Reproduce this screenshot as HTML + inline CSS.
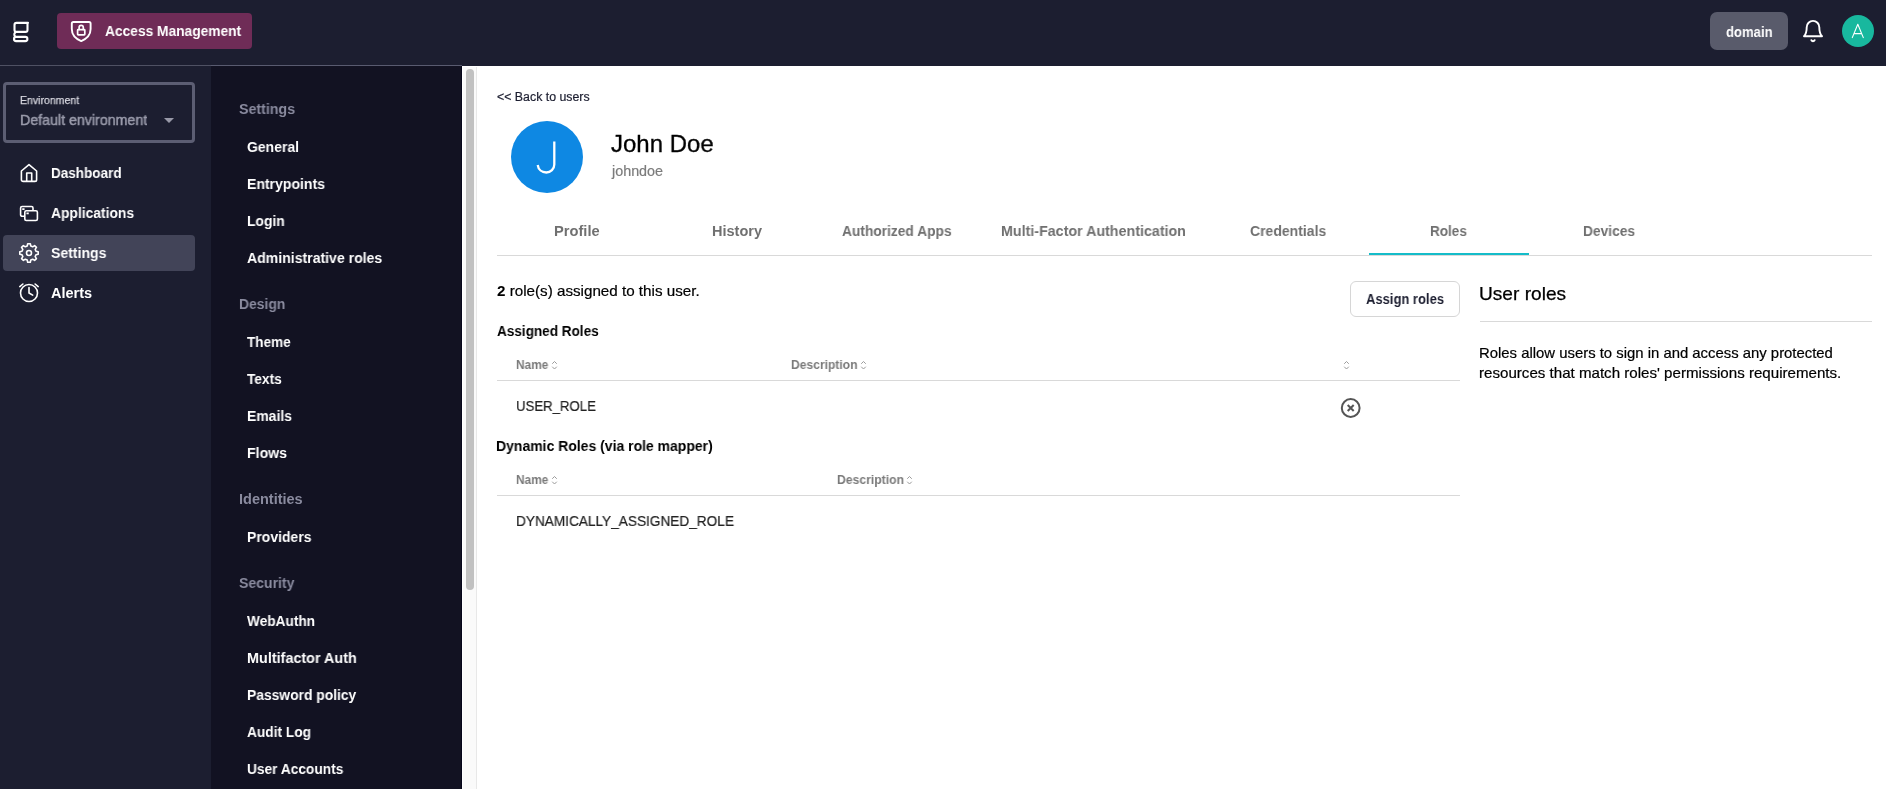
<!DOCTYPE html>
<html><head><meta charset="utf-8">
<style>
*{box-sizing:border-box;margin:0;padding:0}
html,body{width:1886px;height:789px;overflow:hidden;background:#fff;font-family:"Liberation Sans",sans-serif;}
.a{position:absolute;white-space:nowrap;line-height:1;transform-origin:0 0;will-change:transform}
.a b{-webkit-text-stroke:0}
#top{position:absolute;left:0;top:0;width:1886px;height:66px;background:#1c1e30}
#tl1{position:absolute;left:0;top:65px;width:211px;height:1px;background:#4f5163}
#tl2{position:absolute;left:211px;top:65px;width:251px;height:1px;background:#595b70}
#nav{position:absolute;left:0;top:66px;width:211px;height:723px;background:#1c1e30}
#sub{position:absolute;left:211px;top:66px;width:251px;height:723px;background:#121222;border-right:1px solid #06061a}
#sbar{position:absolute;left:462px;top:67px;width:15px;height:722px;background:#fafafa;border-right:1px solid #e8e8e8;border-left:1px solid #fff}
#thumb{position:absolute;left:466px;top:69px;width:8px;height:521px;background:#c1c1c1;border-radius:4px}
#amb{position:absolute;left:57px;top:13px;width:195px;height:36px;background:#6f2c57;border-radius:4px}
#dom{position:absolute;left:1710px;top:12px;width:78px;height:38px;background:#595b6b;border-radius:7px}
#av{position:absolute;left:1842px;top:15px;width:32px;height:32px;border-radius:50%;background:#18b89e}
#env{position:absolute;left:3px;top:82px;width:192px;height:61px;border:3px solid #5c5e73;border-radius:4px}
#sel{position:absolute;left:3px;top:235px;width:192px;height:36px;background:#424458;border-radius:4px}
.hl{position:absolute;height:1px;background:#d9d9d9}
svg{position:absolute;left:0;top:0;overflow:visible}
</style></head><body>
<div id="top"></div><div id="tl1"></div><div id="tl2"></div><div id="nav"></div><div id="sub"></div><div id="sbar"></div><div id="thumb"></div>
<div id="amb"></div><div id="dom"></div><div id="av"></div><div id="env"></div><div id="sel"></div>
<div style="position:absolute;left:511px;top:121px;width:72px;height:72px;border-radius:50%;background:#0e88e3"></div>
<div class="hl" style="left:497px;top:255px;width:1375px"></div>
<div style="position:absolute;left:1369px;top:253px;width:160px;height:2px;background:#14bcc9"></div>
<div style="position:absolute;left:1350px;top:281px;width:110px;height:36px;border:1px solid #d6d6d6;border-radius:6px"></div>
<div class="hl" style="left:497px;top:380px;width:963px"></div>
<div class="hl" style="left:497px;top:495px;width:963px"></div>
<div class="hl" style="left:1480px;top:321px;width:392px"></div>
<div style="position:absolute;left:164px;top:118px;width:0;height:0;border-left:5px solid transparent;border-right:5px solid transparent;border-top:5.500px solid #9899a8"></div>

<svg width="1886" height="789" viewBox="0 0 1886 789" fill="none" stroke="#fff" stroke-linecap="round" stroke-linejoin="round">
<g stroke-width="2.100">
<path d="M28 22.900H16.500a2 2 0 0 0-2 2v5a2 2 0 0 0 2 2h9a2 2 0 0 0 2-2V23"/>
<rect x="14" y="36.900" width="13.400" height="4.200" rx="2.100"/>
<path d="M15.600 32.200c-1.600.8-1.800 3-.4 4.400"/>
</g>
<g stroke-width="1.900">
<path d="M73.400 22H89a1.600 1.600 0 0 1 1.600 1.600V29c0 6-4 9.800-9.400 12.100C75.800 38.800 71.800 35 71.800 29V23.600A1.600 1.600 0 0 1 73.400 22Z"/>
</g>
<g stroke-width="1.700">
<rect x="77.600" y="29.600" width="7.200" height="5.300" rx=".6"/>
<path d="M79.100 29.400v-1.900a2.100 2.100 0 0 1 4.200 0v1.900"/>
</g>
<g stroke-width="1.600">
<path d="M21.400 171 29 164.700l7.600 6.300v8.700a1.700 1.700 0 0 1-1.700 1.700H23.100a1.700 1.700 0 0 1-1.700-1.700Z"/>
<path d="M26.700 181.200v-8.200h5v8.200"/>
</g>
<g stroke-width="1.600">
<path d="M24 216.300h-1.900a1.500 1.500 0 0 1-1.500-1.500V208a1.500 1.500 0 0 1 1.500-1.500h9.400a1.500 1.500 0 0 1 1.500 1.500v1.900"/>
<rect x="24.800" y="210.700" width="12.600" height="9.800" rx="1.500"/>
<path d="M23.100 209.200h.6M27.300 213.400h.6" stroke-width="1.700" stroke-linecap="square"/>
</g>
<g stroke-width="1.600">
<path d="M27.690 243.790 L30.310 243.790 L30.790 246.030 L32.670 246.800 L34.580 245.560 L36.440 247.420 L35.200 249.330 L35.970 251.210 L38.210 251.690 L38.210 254.310 L35.970 254.790 L35.200 256.670 L36.440 258.580 L34.580 260.440 L32.670 259.200 L30.790 259.970 L30.310 262.210 L27.690 262.210 L27.210 259.970 L25.330 259.200 L23.420 260.440 L21.560 258.580 L22.800 256.670 L22.030 254.790 L19.790 254.310 L19.790 251.690 L22.030 251.210 L22.800 249.330 L21.560 247.420 L23.420 245.560 L25.330 246.800 L27.210 246.030Z"/>
<circle cx="29" cy="253" r="2.500"/>
</g>
<g stroke-width="1.600">
<circle cx="29" cy="293" r="8.500"/>
<path d="M29 287.600V293l3.700 2.100"/>
<path d="M19.800 286.600l3.100-2.600M38.200 286.600l-3.100-2.600"/>
</g>
<g stroke-width="1.900">
<path d="M1804 36.200h18c-2.200-2.200-2.700-4.400-2.700-9a6.300 6.300 0 0 0-12.600 0c0 4.600-.5 6.800-2.700 9Z"/>
<path d="M1811.400 40.200a1.800 1.800 0 0 0 3.200 0"/>
</g>
<g stroke-width="1.100">
<path d="M1852.300 37.600 1857.800 24.200 1863.300 37.600M1854 33.600h7.600"/>
</g>
<g stroke-width="2.300" stroke-linecap="butt">
<path d="M554.300 141.500v23a8 8 0 0 1-8 8c-4.400 0-8-3-8.600-7.500"/>
</g>
<g stroke="#555" stroke-width="2" stroke-linecap="butt">
<circle cx="1350.700" cy="408" r="8.900"/>
<path d="M1347.700 405l6 6M1353.700 405l-6 6"/>
</g>
<g stroke="#9a9a9a" stroke-width="1" id="sorts">
<path d="M552.500 363.500l2-2 2 2M552.500 367l2 2 2-2"/>
<path d="M861.500 363.500l2-2 2 2M861.500 367l2 2 2-2"/>
<path d="M1344.500 363.500l2-2 2 2M1344.500 367l2 2 2-2"/>
<path d="M552.500 478.500l2-2 2 2M552.500 482l2 2 2-2"/>
<path d="M907.500 478.500l2-2 2 2M907.500 482l2 2 2-2"/>
</g>
</svg>
<div class="a" style="left:104.68px;top:24px;font-size:14.5px;font-weight:bold;color:#fff;transform:scaleX(0.9490)">Access Management</div>
<div class="a" style="left:1725.92px;top:25px;font-size:14.5px;font-weight:bold;color:#fff;transform:scaleX(0.9033)">domain</div>
<div class="a" style="left:19.92px;top:95px;font-size:11px;font-weight:normal;color:#d8d8e0;-webkit-text-stroke:0.25px #d8d8e0;transform:scaleX(0.9573)">Environment</div>
<div class="a" style="left:19.88px;top:113px;font-size:14.5px;font-weight:normal;color:#9a9bab;-webkit-text-stroke:0.5px #9a9bab;transform:scaleX(0.9804)">Default environment</div>
<div class="a" style="left:50.90px;top:166px;font-size:14.5px;font-weight:bold;color:#fff;transform:scaleX(0.9312)">Dashboard</div>
<div class="a" style="left:50.98px;top:206px;font-size:14.5px;font-weight:bold;color:#fff;transform:scaleX(0.9549)">Applications</div>
<div class="a" style="left:51.15px;top:246px;font-size:14.5px;font-weight:bold;color:#fff;transform:scaleX(0.9680)">Settings</div>
<div class="a" style="left:50.96px;top:286px;font-size:14.5px;font-weight:bold;color:#fff;transform:scaleX(0.9906)">Alerts</div>
<div class="a" style="left:238.84px;top:102px;font-size:14.5px;font-weight:bold;color:#8a8b9f;transform:scaleX(0.9787)">Settings</div>
<div class="a" style="left:246.95px;top:140px;font-size:14.5px;font-weight:bold;color:#fff;transform:scaleX(0.9631)">General</div>
<div class="a" style="left:246.66px;top:177px;font-size:14.5px;font-weight:bold;color:#fff;transform:scaleX(0.9678)">Entrypoints</div>
<div class="a" style="left:246.67px;top:214px;font-size:14.5px;font-weight:bold;color:#fff;transform:scaleX(0.9579)">Login</div>
<div class="a" style="left:246.97px;top:251px;font-size:14.5px;font-weight:bold;color:#fff;transform:scaleX(0.9702)">Administrative roles</div>
<div class="a" style="left:238.57px;top:297px;font-size:14.5px;font-weight:bold;color:#8a8b9f;transform:scaleX(0.9574)">Design</div>
<div class="a" style="left:247.34px;top:335px;font-size:14.5px;font-weight:bold;color:#fff;transform:scaleX(0.9337)">Theme</div>
<div class="a" style="left:247.33px;top:372px;font-size:14.5px;font-weight:bold;color:#fff;transform:scaleX(0.9443)">Texts</div>
<div class="a" style="left:246.67px;top:409px;font-size:14.5px;font-weight:bold;color:#fff;transform:scaleX(0.9599)">Emails</div>
<div class="a" style="left:246.66px;top:446px;font-size:14.5px;font-weight:bold;color:#fff;transform:scaleX(0.9733)">Flows</div>
<div class="a" style="left:238.60px;top:492px;font-size:14.5px;font-weight:bold;color:#8a8b9f;transform:scaleX(0.9998)">Identities</div>
<div class="a" style="left:246.67px;top:530px;font-size:14.5px;font-weight:bold;color:#fff;transform:scaleX(0.9645)">Providers</div>
<div class="a" style="left:238.85px;top:576px;font-size:14.5px;font-weight:bold;color:#8a8b9f;transform:scaleX(0.9681)">Security</div>
<div class="a" style="left:247.34px;top:614px;font-size:14.5px;font-weight:bold;color:#fff;transform:scaleX(0.9431)">WebAuthn</div>
<div class="a" style="left:246.64px;top:651px;font-size:14.5px;font-weight:bold;color:#fff;transform:scaleX(0.9925)">Multifactor Auth</div>
<div class="a" style="left:246.68px;top:688px;font-size:14.5px;font-weight:bold;color:#fff;transform:scaleX(0.9549)">Password policy</div>
<div class="a" style="left:246.98px;top:725px;font-size:14.5px;font-weight:bold;color:#fff;transform:scaleX(0.9463)">Audit Log</div>
<div class="a" style="left:246.77px;top:762px;font-size:14.5px;font-weight:bold;color:#fff;transform:scaleX(0.9461)">User Accounts</div>
<div class="a" style="left:497.03px;top:91px;font-size:12px;font-weight:normal;color:#1c1e30;-webkit-text-stroke:0.2px #1c1e30;transform:scaleX(1.0290)"><< Back to users</div>
<div class="a" style="left:611.09px;top:132px;font-size:24px;font-weight:normal;color:#000;-webkit-text-stroke:0.3px #000;transform:scaleX(0.9986)">John Doe</div>
<div class="a" style="left:611.79px;top:165px;font-size:13.8px;font-weight:normal;color:#7c7c7c;-webkit-text-stroke:0.2px #7c7c7c;transform:scaleX(1.0394)">johndoe</div>
<div class="a" style="left:554.02px;top:224px;font-size:14.5px;font-weight:bold;color:#707070;transform:scaleX(1.0114)">Profile</div>
<div class="a" style="left:712.04px;top:224px;font-size:14.5px;font-weight:bold;color:#707070;transform:scaleX(0.9937)">History</div>
<div class="a" style="left:841.98px;top:224px;font-size:14.5px;font-weight:bold;color:#707070;transform:scaleX(0.9487)">Authorized Apps</div>
<div class="a" style="left:1000.55px;top:224px;font-size:14.5px;font-weight:bold;color:#707070;transform:scaleX(0.9840)">Multi-Factor Authentication</div>
<div class="a" style="left:1250.36px;top:224px;font-size:14.5px;font-weight:bold;color:#707070;transform:scaleX(0.9645)">Credentials</div>
<div class="a" style="left:1429.80px;top:224px;font-size:14.5px;font-weight:bold;color:#707070;transform:scaleX(0.9329)">Roles</div>
<div class="a" style="left:1582.58px;top:224px;font-size:14.5px;font-weight:bold;color:#707070;transform:scaleX(0.9490)">Devices</div>
<div class="a" style="left:496.97px;top:284px;font-size:14.5px;font-weight:normal;color:#000;-webkit-text-stroke:0.2px #000;transform:scaleX(1.0477)"><b>2</b> role(s) assigned to this user.</div>
<div class="a" style="left:1366.01px;top:292px;font-size:14.5px;font-weight:bold;color:#1c1e30;transform:scaleX(0.8967)">Assign roles</div>
<div class="a" style="left:496.89px;top:324px;font-size:14.5px;font-weight:bold;color:#000;transform:scaleX(0.9347)">Assigned Roles</div>
<div class="a" style="left:516.20px;top:359px;font-size:12.5px;font-weight:bold;color:#7a7a7a;transform:scaleX(0.9509)">Name</div>
<div class="a" style="left:791.19px;top:359px;font-size:12.5px;font-weight:bold;color:#7a7a7a;transform:scaleX(0.9663)">Description</div>
<div class="a" style="left:515.98px;top:399px;font-size:14.5px;font-weight:normal;color:#222;-webkit-text-stroke:0.2px #222;transform:scaleX(0.9094)">USER_ROLE</div>
<div class="a" style="left:496.47px;top:439px;font-size:14.5px;font-weight:bold;color:#000;transform:scaleX(0.9641)">Dynamic Roles (via role mapper)</div>
<div class="a" style="left:516.20px;top:474px;font-size:12.5px;font-weight:bold;color:#7a7a7a;transform:scaleX(0.9509)">Name</div>
<div class="a" style="left:836.68px;top:474px;font-size:12.5px;font-weight:bold;color:#7a7a7a;transform:scaleX(0.9737)">Description</div>
<div class="a" style="left:515.90px;top:514px;font-size:14.5px;font-weight:normal;color:#222;-webkit-text-stroke:0.2px #222;transform:scaleX(0.9402)">DYNAMICALLY_ASSIGNED_ROLE</div>
<div class="a" style="left:1479.18px;top:284px;font-size:19px;font-weight:normal;color:#000;-webkit-text-stroke:0.25px #000;transform:scaleX(1.0062)">User roles</div>
<div class="a" style="left:1479.30px;top:346px;font-size:14.5px;font-weight:normal;color:#000;-webkit-text-stroke:0.2px #000;transform:scaleX(1.0259)">Roles allow users to sign in and access any protected</div>
<div class="a" style="left:1479.39px;top:366px;font-size:14.5px;font-weight:normal;color:#000;-webkit-text-stroke:0.2px #000;transform:scaleX(1.0420)">resources that match roles' permissions requirements.</div>
</body></html>
